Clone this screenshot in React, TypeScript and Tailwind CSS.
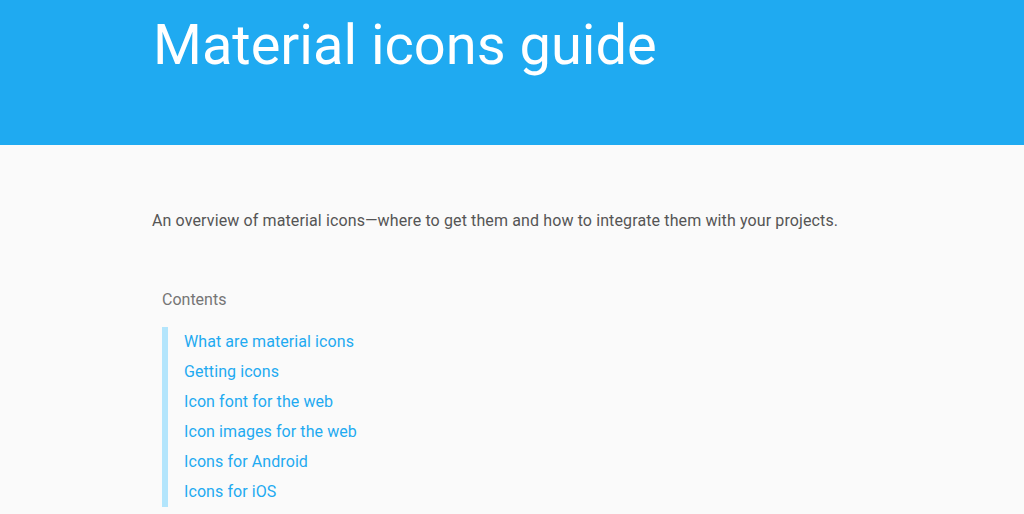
const contents = [
  "What are material icons",
  "Getting icons",
  "Icon font for the web",
  "Icon images for the web",
  "Icons for Android",
  "Icons for iOS",
]

export default function App() {
  return (
    <div className="min-h-screen bg-[#fafafa] font-['Roboto',sans-serif]">
      <header className="h-[145px] bg-[#1faaf1] pl-[152px] pt-[12px]">
        <h1 className="ml-[1px] text-[56px] leading-[67px] font-normal text-white">Material icons guide</h1>
      </header>

      <main className="pl-[152px] pt-[64px]">
        <p className="text-[16px] leading-6 tracking-[0.12px] text-[#555555]">
          An overview of material icons—where to get them and how to integrate them with your projects.
        </p>

        <nav className="ml-[10px] mt-[55px]">
          <h2 className="text-[16px] leading-6 text-[#757575]">Contents</h2>
          <ul className="mt-[15px] border-l-[6px] border-[#b3e5fc] pl-4">
            {contents.map((item) => (
              <li key={item} className="text-[16px] leading-[30px] tracking-[0.08px] text-[#1faaf1]">
                <a href="#">{item}</a>
              </li>
            ))}
          </ul>
        </nav>
      </main>
    </div>
  )
}
